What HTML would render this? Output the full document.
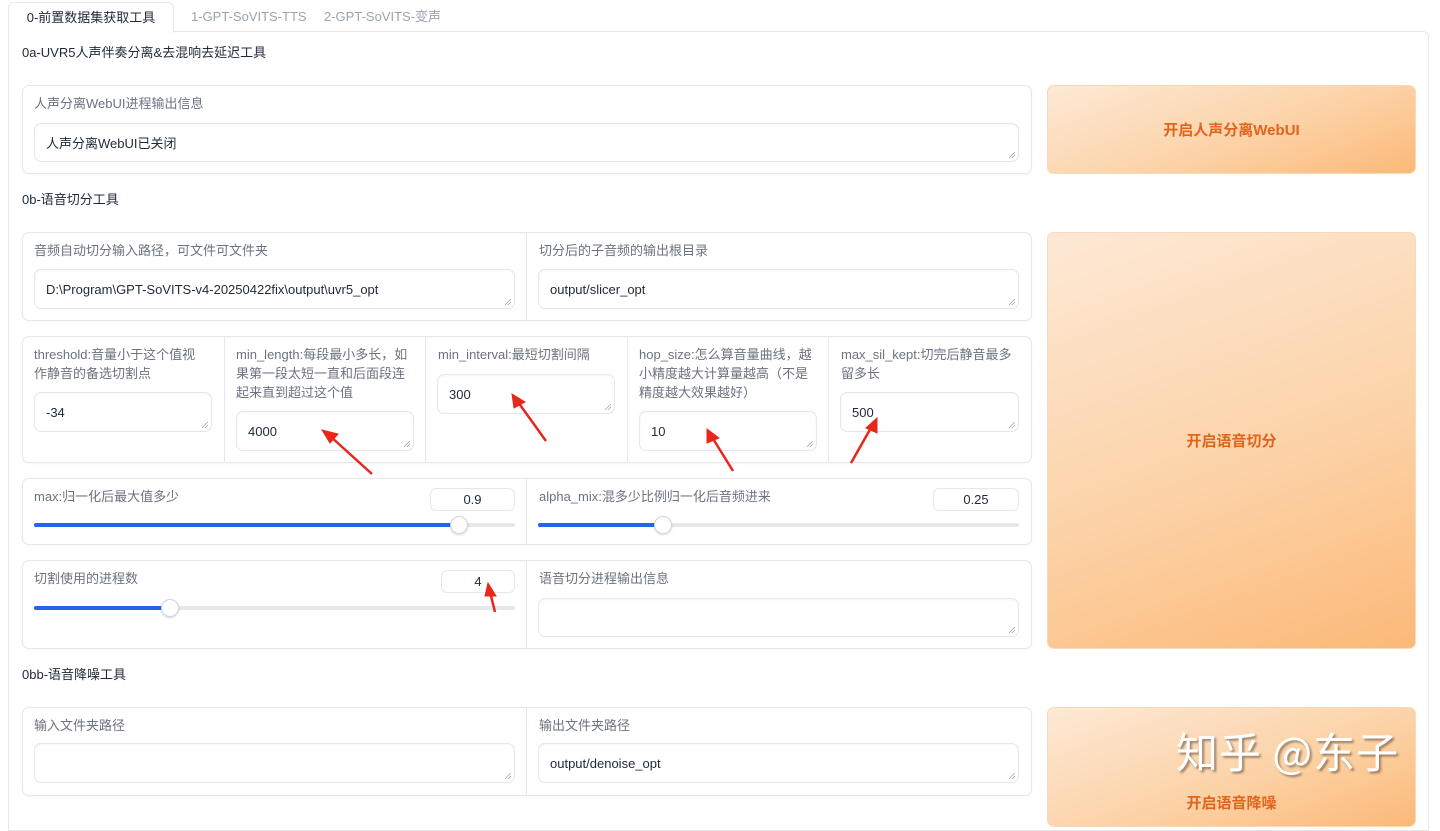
<!DOCTYPE html>
<html><head><meta charset="utf-8"><style>
*{box-sizing:border-box;margin:0;padding:0}
body{width:1440px;height:808px;overflow:hidden;background:#fff;font-family:"Liberation Sans","Noto Sans CJK SC",sans-serif;font-size:13px;color:#374151;position:relative}
.a{position:absolute}
.panel{position:absolute;border:1px solid #e5e7eb;border-radius:7px;background:#fff;box-shadow:0 1px 2px rgba(0,0,0,.04)}
.lbl{position:absolute;color:#6b7280;font-size:13px;line-height:19px}
.ta{position:absolute;border:1px solid #e5e7eb;border-radius:7px;background:#fff;padding:0 11px;display:flex;align-items:center;color:#1f2937;font-size:13px;box-shadow:inset 0 1px 2px rgba(0,0,0,.04)}
.ta:after{content:"";position:absolute;right:3px;bottom:3px;width:6px;height:6px;background:linear-gradient(135deg,transparent 45%,#999 46%,#999 52%,transparent 53%,transparent 70%,#999 71%,#999 77%,transparent 78%)}
.vl{position:absolute;width:1px;background:#e5e7eb}
.h{position:absolute;left:22px;font-size:13px;color:#1f2937;line-height:19px}
.btn{position:absolute;border-radius:7px;background:linear-gradient(160deg,#fde9d6 0%,#fcd3a8 55%,#fbb978 100%);color:#e0641c;font-weight:bold;font-size:15px;display:flex;align-items:center;justify-content:center;border:1px solid #fcd9b6}
.track{position:absolute;height:4px;background:#e5e7eb;border-radius:2px}
.fill{position:absolute;height:4px;background:#2563eb;border-radius:2px}
.thumb{position:absolute;width:18px;height:18px;border-radius:50%;background:#fff;border:1px solid #d1d5db;box-shadow:0 1px 2px rgba(0,0,0,.15)}
.num{position:absolute;border:1px solid #e5e7eb;border-radius:6px;height:23px;text-align:center;line-height:21px;color:#1f2937;font-size:13px}
.tab{position:absolute;line-height:19px}
</style></head><body>
<div class="a" style="left:8px;top:31px;width:1421px;height:800px;border:1px solid #e5e7eb;border-radius:0 6px 0 0"></div>
<div class="a" style="left:8px;top:2px;width:166px;height:31px;border:1px solid #e5e7eb;border-bottom:none;border-radius:6px 6px 0 0;background:#fff;text-align:center;line-height:30px;color:#1f2937">0-前置数据集获取工具</div>
<div class="tab" style="left:191px;top:7px;color:#9ca3af">1-GPT-SoVITS-TTS</div>
<div class="tab" style="left:324px;top:7px;color:#9ca3af">2-GPT-SoVITS-变声</div>

<div class="h" style="top:43px">0a-UVR5人声伴奏分离&amp;去混响去延迟工具</div>
<div class="panel" style="left:22px;top:85px;width:1010px;height:89px"></div>
<div class="lbl" style="left:34px;top:94px">人声分离WebUI进程输出信息</div>
<div class="ta" style="left:34px;top:123px;width:985px;height:39px">人声分离WebUI已关闭</div>
<div class="btn" style="left:1047px;top:85px;width:369px;height:89px">开启人声分离WebUI</div>

<div class="h" style="top:190px">0b-语音切分工具</div>
<div class="panel" style="left:22px;top:232px;width:1010px;height:89px"></div>
<div class="vl" style="left:526px;top:233px;height:87px"></div>
<div class="lbl" style="left:34px;top:241px">音频自动切分输入路径，可文件可文件夹</div>
<div class="ta" style="left:34px;top:269px;width:481px;height:40px">D:\Program\GPT-SoVITS-v4-20250422fix\output\uvr5_opt</div>
<div class="lbl" style="left:539px;top:241px">切分后的子音频的输出根目录</div>
<div class="ta" style="left:538px;top:269px;width:481px;height:40px">output/slicer_opt</div>

<div class="panel" style="left:22px;top:336px;width:1010px;height:127px"></div>
<div class="vl" style="left:224px;top:337px;height:125px"></div>
<div class="vl" style="left:425px;top:337px;height:125px"></div>
<div class="vl" style="left:627px;top:337px;height:125px"></div>
<div class="vl" style="left:828px;top:337px;height:125px"></div>
<div class="lbl" style="left:34px;top:345px;width:172px">threshold:音量小于这个值视作静音的备选切割点</div>
<div class="ta" style="left:34px;top:392px;width:178px;height:40px">-34</div>
<div class="lbl" style="left:236px;top:345px;width:180px">min_length:每段最小多长，如果第一段太短一直和后面段连起来直到超过这个值</div>
<div class="ta" style="left:236px;top:411px;width:178px;height:40px">4000</div>
<div class="lbl" style="left:438px;top:345px;width:180px">min_interval:最短切割间隔</div>
<div class="ta" style="left:437px;top:374px;width:178px;height:40px">300</div>
<div class="lbl" style="left:639px;top:345px;width:180px">hop_size:怎么算音量曲线，越小精度越大计算量越高（不是精度越大效果越好）</div>
<div class="ta" style="left:639px;top:411px;width:178px;height:40px">10</div>
<div class="lbl" style="left:841px;top:345px;width:180px">max_sil_kept:切完后静音最多留多长</div>
<div class="ta" style="left:840px;top:392px;width:179px;height:40px">500</div>

<div class="panel" style="left:22px;top:478px;width:1010px;height:67px"></div>
<div class="vl" style="left:526px;top:479px;height:65px"></div>
<div class="lbl" style="left:34px;top:487px">max:归一化后最大值多少</div>
<div class="num" style="left:430px;top:488px;width:85px">0.9</div>
<div class="track" style="left:34px;top:523px;width:481px"></div>
<div class="fill" style="left:34px;top:523px;width:425px"></div>
<div class="thumb" style="left:450px;top:516px"></div>
<div class="lbl" style="left:539px;top:487px">alpha_mix:混多少比例归一化后音频进来</div>
<div class="num" style="left:933px;top:488px;width:86px">0.25</div>
<div class="track" style="left:538px;top:523px;width:481px"></div>
<div class="fill" style="left:538px;top:523px;width:125px"></div>
<div class="thumb" style="left:654px;top:516px"></div>

<div class="panel" style="left:22px;top:560px;width:1010px;height:89px"></div>
<div class="vl" style="left:526px;top:561px;height:87px"></div>
<div class="lbl" style="left:34px;top:569px">切割使用的进程数</div>
<div class="num" style="left:441px;top:570px;width:74px">4</div>
<div class="track" style="left:34px;top:606px;width:481px"></div>
<div class="fill" style="left:34px;top:606px;width:136px"></div>
<div class="thumb" style="left:161px;top:599px"></div>
<div class="lbl" style="left:539px;top:569px">语音切分进程输出信息</div>
<div class="ta" style="left:538px;top:598px;width:481px;height:39px"></div>

<div class="btn" style="left:1047px;top:232px;width:369px;height:417px">开启语音切分</div>

<div class="h" style="top:665px">0bb-语音降噪工具</div>
<div class="panel" style="left:22px;top:707px;width:1010px;height:89px"></div>
<div class="vl" style="left:526px;top:708px;height:87px"></div>
<div class="lbl" style="left:34px;top:716px">输入文件夹路径</div>
<div class="ta" style="left:34px;top:743px;width:481px;height:40px"></div>
<div class="lbl" style="left:539px;top:716px">输出文件夹路径</div>
<div class="ta" style="left:538px;top:743px;width:481px;height:40px">output/denoise_opt</div>
<div class="btn" style="left:1047px;top:707px;width:369px;height:120px;align-items:flex-start;padding-top:84px">开启语音降噪</div>
<div class="a" style="left:1176px;top:723px;font-size:42px;color:#fff;font-family:'Noto Sans CJK SC',sans-serif;text-shadow:2px 2px 2px rgba(90,70,50,.6);letter-spacing:1px;line-height:56px">知乎 @东子</div>

<svg class="a" style="left:0;top:0" width="1440" height="808">
<g fill="#e8261c" stroke="#e8261c">
<line x1="372" y1="474" x2="330" y2="436" stroke-width="2.5"/><polygon points="322,430 338,434 330,443" />
<line x1="546" y1="441" x2="518" y2="402" stroke-width="2.5"/><polygon points="512,394 525,402 514,408"/>
<line x1="733" y1="471" x2="712" y2="437" stroke-width="2.5"/><polygon points="707,429 719,438 707,443"/>
<line x1="851" y1="463" x2="872" y2="426" stroke-width="2.5"/><polygon points="877,418 877,433 866,428"/>
<line x1="495" y1="612" x2="490" y2="592" stroke-width="2.5"/><polygon points="488,583 496,596 485,596"/>
</g></svg>
</body></html>
